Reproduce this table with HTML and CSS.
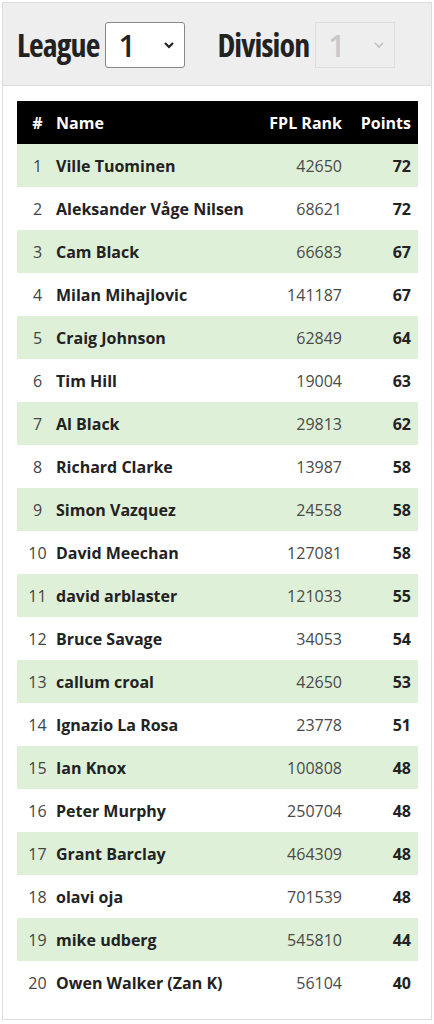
FILE: index.html
```html
<!DOCTYPE html>
<html>
<head>
<meta charset="utf-8">
<link rel="stylesheet" href="styles.css">
</head>
<body>
<div class="panel">
  <div class="panel-head">
    <label class="lbl">League</label>
    <div class="sel">
      <select class="ctl"><option>1</option></select>
      <svg class="chev" width="12" height="8" viewBox="0 0 12 8"><path d="M2 2 L6 6 L10 2" fill="none" stroke="currentColor" stroke-width="2.2"/></svg>
    </div>
    <label class="lbl lbl-div">Division</label>
    <div class="sel sel-off">
      <select class="ctl" disabled><option>1</option></select>
      <svg class="chev" width="12" height="8" viewBox="0 0 12 8"><path d="M2 2 L6 6 L10 2" fill="none" stroke="currentColor" stroke-width="1.6"/></svg>
    </div>
  </div>
  <div class="panel-body">
    <table class="tbl">
      <thead>
        <tr><th class="c-pos">#</th><th class="c-name">Name</th><th class="c-rank">FPL Rank</th><th class="c-pts">Points</th></tr>
      </thead>
      <tbody>
        <tr class="hl"><td class="c-pos">1</td><td class="c-name">Ville Tuominen</td><td class="c-rank">42650</td><td class="c-pts">72</td></tr>
        <tr><td class="c-pos">2</td><td class="c-name">Aleksander Våge Nilsen</td><td class="c-rank">68621</td><td class="c-pts">72</td></tr>
        <tr class="hl"><td class="c-pos">3</td><td class="c-name">Cam Black</td><td class="c-rank">66683</td><td class="c-pts">67</td></tr>
        <tr><td class="c-pos">4</td><td class="c-name">Milan Mihajlovic</td><td class="c-rank">141187</td><td class="c-pts">67</td></tr>
        <tr class="hl"><td class="c-pos">5</td><td class="c-name">Craig Johnson</td><td class="c-rank">62849</td><td class="c-pts">64</td></tr>
        <tr><td class="c-pos">6</td><td class="c-name">Tim Hill</td><td class="c-rank">19004</td><td class="c-pts">63</td></tr>
        <tr class="hl"><td class="c-pos">7</td><td class="c-name">Al Black</td><td class="c-rank">29813</td><td class="c-pts">62</td></tr>
        <tr><td class="c-pos">8</td><td class="c-name">Richard Clarke</td><td class="c-rank">13987</td><td class="c-pts">58</td></tr>
        <tr class="hl"><td class="c-pos">9</td><td class="c-name">Simon Vazquez</td><td class="c-rank">24558</td><td class="c-pts">58</td></tr>
        <tr><td class="c-pos">10</td><td class="c-name">David Meechan</td><td class="c-rank">127081</td><td class="c-pts">58</td></tr>
        <tr class="hl"><td class="c-pos">11</td><td class="c-name">david arblaster</td><td class="c-rank">121033</td><td class="c-pts">55</td></tr>
        <tr><td class="c-pos">12</td><td class="c-name">Bruce Savage</td><td class="c-rank">34053</td><td class="c-pts">54</td></tr>
        <tr class="hl"><td class="c-pos">13</td><td class="c-name">callum croal</td><td class="c-rank">42650</td><td class="c-pts">53</td></tr>
        <tr><td class="c-pos">14</td><td class="c-name">Ignazio La Rosa</td><td class="c-rank">23778</td><td class="c-pts">51</td></tr>
        <tr class="hl"><td class="c-pos">15</td><td class="c-name">Ian Knox</td><td class="c-rank">100808</td><td class="c-pts">48</td></tr>
        <tr><td class="c-pos">16</td><td class="c-name">Peter Murphy</td><td class="c-rank">250704</td><td class="c-pts">48</td></tr>
        <tr class="hl"><td class="c-pos">17</td><td class="c-name">Grant Barclay</td><td class="c-rank">464309</td><td class="c-pts">48</td></tr>
        <tr><td class="c-pos">18</td><td class="c-name">olavi oja</td><td class="c-rank">701539</td><td class="c-pts">48</td></tr>
        <tr class="hl"><td class="c-pos">19</td><td class="c-name">mike udberg</td><td class="c-rank">545810</td><td class="c-pts">44</td></tr>
        <tr><td class="c-pos">20</td><td class="c-name">Owen Walker (Zan K)</td><td class="c-rank">56104</td><td class="c-pts">40</td></tr>
      </tbody>
    </table>
  </div>
</div>
</body>
</html>
```
FILE: styles.css
```css
html, body {
  margin: 0;
  padding: 0;
  background: #fff;
}
body {
  padding: 2px;
  font-family: "Open Sans", "Liberation Sans", sans-serif;
  color: #333;
}
.panel {
  width: 430px;
  border: 1px solid #ddd;
  box-sizing: border-box;
}
.panel-head {
  background: #eee;
  border-bottom: 1px solid #ddd;
  height: 83px;
  box-sizing: border-box;
  padding: 19px 14px 0;
  display: flex;
  align-items: flex-start;
}
.lbl {
  font-size: 32px;
  font-weight: 700;
  font-stretch: 75%;
  color: #222;
  line-height: 46px;
  letter-spacing: -0.9px;
  margin-right: 6px;
}
.lbl-div {
  margin-left: 32px;
}
.sel {
  position: relative;
  width: 80px;
  height: 46px;
}
.ctl {
  appearance: none;
  -webkit-appearance: none;
  width: 80px;
  height: 46px;
  box-sizing: border-box;
  border: 1px solid #888;
  border-radius: 3px;
  background: #fff;
  font-family: "Open Sans", sans-serif;
  font-size: 30px;
  font-weight: 600;
  color: #222;
  padding: 0 0 0 12px;
  margin: 0;
}
.chev {
  position: absolute;
  right: 10px;
  top: 19px;
  color: #222;
  pointer-events: none;
}
.sel-off .ctl {
  border-color: #d6d6d6;
  background: #eee;
  color: #b8b8b8;
  border-radius: 0;
}
.sel-off .chev {
  color: #c0c0c0;
}
.panel-body {
  padding: 15px 14px 15px;
}
.tbl {
  width: 401px;
  border-collapse: collapse;
  table-layout: fixed;
  font-size: 16px;
}
.tbl th, .tbl td {
  height: 43px;
  box-sizing: border-box;
  padding: 0 8px;
  vertical-align: middle;
}
.tbl thead tr {
  background: #000;
  color: #fff;
}
.tbl th {
  font-weight: 700;
}
.tbl td {
  color: #444;
}
.tbl tr.hl {
  background: #dff0d8;
}
.c-pos {
  width: 33px;
  text-align: center;
  padding: 0 0 0 8px !important;
}
.c-name {
  text-align: left;
  padding-left: 6px !important;
  font-weight: 700;
  white-space: nowrap;
}
.tbl td.c-name {
  font-weight: 700;
  color: #222;
}
.c-rank {
  width: 100px;
  text-align: right;
}
.tbl td.c-rank {
  font-weight: 400;
  color: #4a4a4a;
}
.c-pts {
  width: 68px;
  text-align: right;
  padding-right: 7px !important;
}
.tbl td.c-pts {
  font-weight: 700;
  color: #222;
}
```
